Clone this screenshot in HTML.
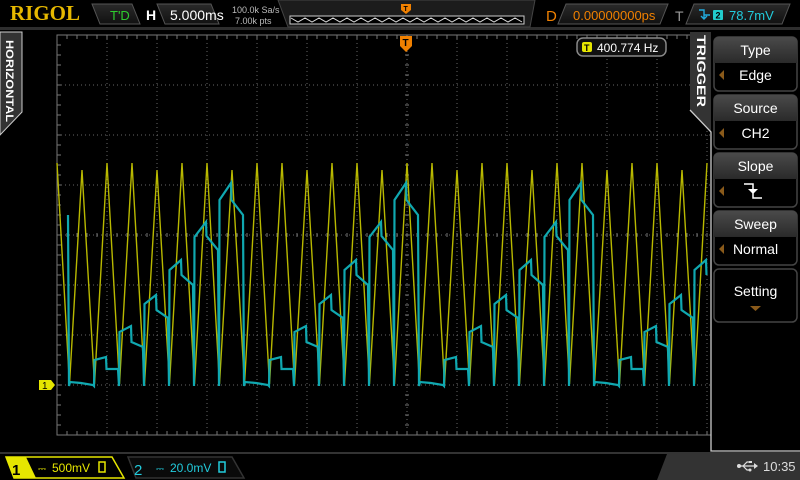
<!DOCTYPE html>
<html><head><meta charset="utf-8"><style>
html,body{margin:0;padding:0;background:#000;width:800px;height:480px;overflow:hidden}
svg{display:block}
text{font-family:"Liberation Sans",sans-serif}
</style></head><body>
<svg id="s" width="800" height="480" viewBox="0 0 800 480" xmlns="http://www.w3.org/2000/svg">
<defs>
<linearGradient id="btn" x1="0" y1="0" x2="0" y2="1"><stop offset="0" stop-color="#4a4a4a"/><stop offset="1" stop-color="#2a2a2a"/></linearGradient>
<linearGradient id="box" x1="0" y1="0" x2="0" y2="1"><stop offset="0" stop-color="#2a2a2a"/><stop offset="1" stop-color="#111"/></linearGradient>
</defs>
<rect width="800" height="480" fill="#000"/>
<!-- top bar -->
<rect x="0" y="27" width="800" height="3" fill="#2e2e2e"/>
<text x="10" y="20" style="font-family:'Liberation Serif',serif" font-weight="bold" font-size="21" fill="#e6b800" textLength="70" lengthAdjust="spacingAndGlyphs">RIGOL</text>
<polygon points="92,4 132,4 140,24 100,24" fill="url(#box)" stroke="#555"/>
<text x="110" y="20" font-size="13" fill="#2ecc2e">T'D</text>
<text x="146" y="20" font-size="14" font-weight="bold" fill="#fff">H</text>
<polygon points="157,4 211,4 219,24 165,24" fill="url(#box)" stroke="#555"/>
<text x="170" y="20" font-size="14" fill="#fff">5.000ms</text>
<text x="232" y="13" font-size="9" fill="#bbb">100.0k Sa/s</text>
<text x="235" y="24" font-size="9" fill="#bbb">7.00k pts</text>
<polygon points="278,0 535,0 530,27 288,27" fill="#1c1c1c" stroke="#444"/>
<rect x="290" y="16" width="234" height="8" fill="#000" stroke="#ccc" stroke-width="1"/>
<polyline id="mini" fill="none" stroke="#ddd" stroke-width="1"/>
<polygon points="401,4 411,4 411,10 406,14 401,10" fill="#f08000"/>
<text x="403.5" y="11" font-size="7" fill="#000" font-weight="bold">T</text>
<text x="546" y="21" font-size="15" fill="#f08000">D</text>
<polygon points="566,4 668,4 660,24 558,24" fill="url(#box)" stroke="#555"/>
<text x="573" y="20" font-size="13" fill="#f08000">0.00000000ps</text>
<text x="675" y="21" font-size="14" fill="#999">T</text>
<polygon points="694,4 790,4 782,24 686,24" fill="url(#box)" stroke="#555"/>
<path d="M699,10 h5 v9 M701,16 l3,3 l3,-3 M704,15 h6" stroke="#2ad" stroke-width="1.4" fill="none"/>
<rect x="713" y="10" width="10" height="10" rx="1" fill="#2cc"/>
<text x="715.5" y="18.5" font-size="9" fill="#000" font-weight="bold">2</text>
<text x="729" y="20" font-size="13" fill="#2cd">78.7mV</text>
<!-- grid -->
<g id="grid"></g>
<!-- waves -->
<polyline id="yel" fill="none" stroke="#b8b800" stroke-width="1.4"/>
<polyline id="cy" fill="none" stroke="#10a8b0" stroke-width="2.2"/>
<!-- trigger marker -->
<polygon points="400,36 412,36 412,46 406,52 400,46" fill="#f08000"/>
<text x="402.5" y="46" font-size="10" font-weight="bold" fill="#000">T</text>
<!-- ch1 marker -->
<polygon points="39,380 51,380 55,385 51,390 39,390" fill="#e6e600"/>
<text x="42" y="389" font-size="10" fill="#000">1</text>
<!-- freq box -->
<rect x="577" y="38" width="89" height="18" rx="6" fill="#111" stroke="#888" stroke-width="1.5"/>
<rect x="582" y="42" width="10" height="10" rx="2" fill="#e6e600"/>
<text x="584" y="51" font-size="9" font-weight="bold" fill="#000">T</text>
<text x="597" y="52" font-size="12" fill="#fff">400.774 Hz</text>
<!-- left tab -->
<polygon points="0,32 22,32 22,112 0,135" fill="#333" stroke="#ccc" stroke-width="1"/>
<text transform="translate(6,40) rotate(90)" font-size="11" font-weight="bold" fill="#fff" textLength="82" lengthAdjust="spacingAndGlyphs">HORIZONTAL</text>
<!-- right panel -->
<rect x="711" y="30" width="89" height="421" fill="#000"/>
<polygon points="690,32 711,32 711,132 690,110" fill="#333"/>
<path d="M690,110 L711,132 L711,451 L800,451" stroke="#ccc" stroke-width="1.3" fill="none"/>
<text transform="translate(697,35) rotate(90)" font-size="12" font-weight="bold" fill="#fff" textLength="72" lengthAdjust="spacingAndGlyphs">TRIGGER</text>
<g id="menu"></g>
<!-- bottom -->
<rect x="0" y="452" width="800" height="2" fill="#333"/>
<polygon points="667,454 800,454 800,480 657,480" fill="#333"/>
<path d="M739,466 h15 M743,466 l4,-4 h3 M743,466 l4,4 h3" stroke="#ddd" stroke-width="1.2" fill="none"/>
<path d="M754,463 v6 l4,-3 z" fill="#ddd"/>
<circle cx="739" cy="466" r="2" fill="#ddd"/>
<circle cx="750" cy="470" r="1.5" fill="#ddd"/>
<rect x="749" y="461" width="3" height="2" fill="#ddd"/>
<text x="763" y="471" font-size="13" fill="#ddd">10:35</text>
<polygon points="6,457 112,457 124,478 14,478" fill="#000" stroke="#e6e600" stroke-width="1.5"/>
<polygon points="6,457 26,457 36,478 14,478" fill="#e6e600"/>
<text x="12" y="475" font-size="15" fill="#000" font-weight="bold">1</text>
<text x="38" y="472" font-size="10" fill="#e6e600">⎓</text>
<text x="52" y="472" font-size="12" fill="#e6e600">500mV</text>
<rect x="99" y="462" width="6" height="10" fill="none" stroke="#e6e600" stroke-width="1.5"/>
<polygon points="128,457 232,457 244,478 136,478" fill="#0a0a0a" stroke="#333" stroke-width="1.5"/>
<text x="134" y="475" font-size="15" fill="#2cd">2</text>
<text x="156" y="472" font-size="10" fill="#2cd">⎓</text>
<text x="170" y="472" font-size="12" fill="#2cd">20.0mV</text>
<rect x="219" y="462" width="6" height="10" fill="none" stroke="#2cd" stroke-width="1.5"/>
</svg>
<script>
var NS="http://www.w3.org/2000/svg",g=document.getElementById('grid');
function el(p,t,a){var e=document.createElementNS(NS,t);for(var k in a)e.setAttribute(k,a[k]);p.appendChild(e);return e;}
var L=57,R=711,T=35,B=435;
for(var x=107;x<R;x+=50)el(g,'line',{x1:x,y1:T,x2:x,y2:B,stroke:'#666','stroke-width':1,'stroke-dasharray':'1,3'});
for(var y=85;y<B;y+=50)el(g,'line',{x1:L,y1:y,x2:R,y2:y,stroke:'#666','stroke-width':1,'stroke-dasharray':'1,3'});
el(g,'path',{d:'M'+R+','+T+' H'+L+' V'+B+' H'+R,stroke:'#777',fill:'none'});
var d='';
for(var x=L+10;x<R;x+=10){d+='M'+x+','+T+'v4M'+x+','+B+'v-4M'+x+',233v4';}
for(var y=T+10;y<B;y+=10){d+='M'+L+','+y+'h4M405,'+y+'h4';}
el(g,'path',{d:d,stroke:'#777','stroke-width':1});
var p=[];for(var k=-1;k<28;k++){var px=57+25*k;var py=(k%3==1)?170:163;p.push(px+','+py);p.push((px+12.5)+','+384);}
document.getElementById('yel').setAttribute('points',p.filter(function(s){var x=parseFloat(s);return x>=57&&x<=711;}).join(' '));
var Ls=[384,360,332,304,270,237,200],Pk=[384,357,326,295,260,222,183],Dr=[384,369,342,310,275,236,200],En=[384,369,347,318,285,250,215];
var c=[];
for(var cyc=-2;cyc<5;cyc++){var b=69+175*cyc;
for(var k=0;k<7;k++){var s=b+25*k;
if(k==0){c.push([s,386],[s+1,382],[s+12,383],[s+24,385]);}
else{c.push([s,386],[s+0.5,Ls[k]],[s+12,Pk[k]],[s+12.5,Dr[k]],[s+24,En[k]]);}
}}
var cp=c.filter(function(q){return q[0]>=57&&q[0]<=711;}).map(function(q){return q[0]+','+q[1];});
document.getElementById('cy').setAttribute('points',cp.join(' '));
var m=[];for(var x=291;x<=523;x+=7)m.push(x+','+(((x-291)/7)%2?22:18));
document.getElementById('mini').setAttribute('points',m.join(' '));
var mn=document.getElementById('menu');
var items=[['Type','Edge'],['Source','CH2'],['Slope',''],['Sweep','Normal']];
items.forEach(function(it,i){var y=37+i*58;
el(mn,'rect',{x:714,y:y,width:83,height:54,rx:5,fill:'#000',stroke:'#444','stroke-width':1.5});
el(mn,'path',{d:'M714,'+(y+26)+' V'+(y+5)+' a5,5 0 0 1 5,-5 H792 a5,5 0 0 1 5,5 V'+(y+26)+' Z',fill:'url(#btn)'});
var t=el(mn,'text',{x:755.5,y:y+18,'font-size':14,fill:'#fff','text-anchor':'middle'});t.textContent=it[0];
el(mn,'polygon',{points:'724,'+(y+33)+' 724,'+(y+43)+' 719,'+(y+38),fill:'#8a5a1a'});
if(it[1]){var t2=el(mn,'text',{x:755.5,y:y+43,'font-size':14,fill:'#fff','text-anchor':'middle'});t2.textContent=it[1];}
else{el(mn,'path',{d:'M744,'+(y+31)+' h9 v14 h9',stroke:'#fff','stroke-width':1.5,fill:'none'});
el(mn,'polygon',{points:'748,'+(y+36)+' 758,'+(y+36)+' 753,'+(y+41),fill:'#fff'});}
});
var y=269;
el(mn,'rect',{x:714,y:y,width:83,height:53,rx:5,fill:'#000',stroke:'#444','stroke-width':1.5});
var t=el(mn,'text',{x:755.5,y:y+27,'font-size':14,fill:'#fff','text-anchor':'middle'});t.textContent='Setting';
el(mn,'polygon',{points:'750,'+(y+37)+' 761,'+(y+37)+' 755.5,'+(y+42),fill:'#8a5a1a'});
</script>
</body></html>
